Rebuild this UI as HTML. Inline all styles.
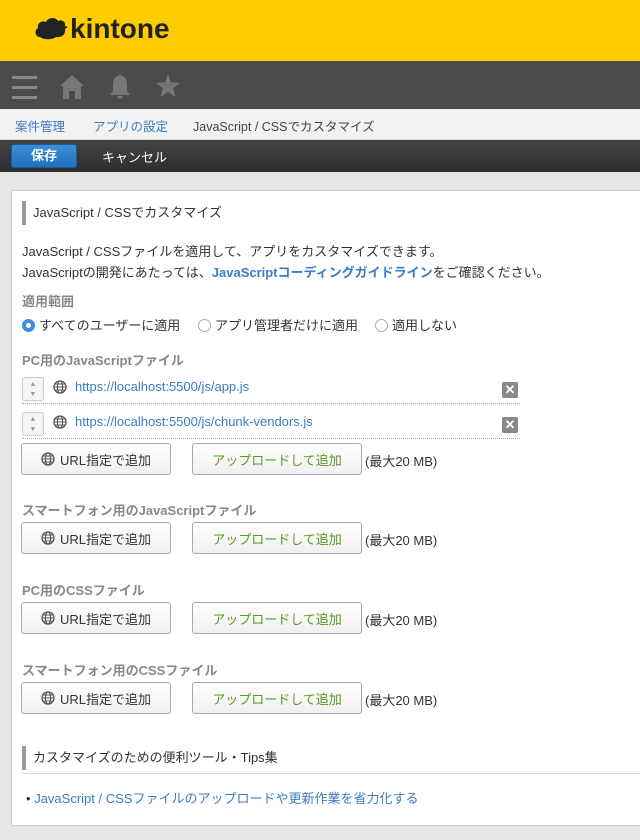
<!DOCTYPE html>
<html><head><meta charset="utf-8"><style>
*{box-sizing:border-box;margin:0;padding:0}
body{width:640px;height:840px;overflow:hidden;background:#e6e6e6;font-family:"Liberation Sans","Noto Sans CJK JP",sans-serif;position:relative;font-size:13px;color:#333}
.a{position:absolute;white-space:nowrap}
.hdr{left:0;top:0;width:640px;height:61px;background:#fc0}
.nav{left:0;top:61px;width:640px;height:48px;background:#4b4b4b}
.bc{left:0;top:109px;width:640px;height:31px;background:#f2f2f2;border-bottom:1px solid #ddd}
.tb{left:0;top:140px;width:640px;height:32px;background:linear-gradient(#454545,#2d2d2d)}
.panel{left:11px;top:190px;width:640px;height:636px;background:#fff;border:1px solid #ccc}
.sec{border-left:4px solid #999;padding-left:7px;font-size:13px;color:#333;height:24px;line-height:24px}
.lbl{color:#888;font-weight:bold;font-size:13px}
.btn{height:32px;border:1px solid #aaa;border-radius:3px;background:linear-gradient(#fff,#f0f0f0);font-size:13px;display:flex;align-items:center;justify-content:center;gap:5px}
.link{color:#3b7cc4}
.x{width:16px;height:16px;background:#888;border-radius:2px;color:#fff;font-size:13px;line-height:16px;text-align:center;font-weight:bold}
.radio{display:inline-block;width:13px;height:13px;border-radius:50%;border:1px solid #aaa;vertical-align:-2px;margin-right:4px}
.sp{width:22px;height:24px;border:1px solid #ccc;border-radius:3px;background:#f5f5f5;color:#999;font-size:7px;text-align:center;line-height:10px;padding-top:2px}
.dot{height:1px;border-top:1px dotted #aaa;width:498px;left:22px}
</style></head><body>
<svg width="0" height="0" style="position:absolute"><defs><g id="gl"><circle cx="7" cy="7" r="6" fill="none" stroke="#555" stroke-width="1.3"/><ellipse cx="7" cy="7" rx="2.6" ry="6" fill="none" stroke="#555" stroke-width="1.1"/><path d="M1 7H13M2 4H12M2 10H12" stroke="#555" stroke-width="1"/></g></defs></svg>
<div class="a hdr"></div>
<svg class="a" style="left:34px;top:15px" width="34" height="26" viewBox="0 0 34 26"><path d="M6 22 C1 22 0 15 4 13 C3 8 8 5 12 7 C14 2 22 2 24 6 C28 4 32 7 31 11 L34 12 L31 14 C32 19 28 23 22 22 C18 25 10 25 6 22Z" fill="#222"/></svg>
<div class="a" style="left:70px;top:13px;font-size:28px;font-weight:bold;color:#222">kintone</div>
<div class="a nav"></div>
<div class="a" style="left:12px;top:76px;width:25px;height:3px;background:#888;box-shadow:0 10px 0 #888,0 20px 0 #888"></div>
<svg class="a" style="left:58px;top:73px" width="28" height="28" viewBox="0 0 28 28"><path d="M14 2 L26 13 H23 V26 H17 V18 H11 V26 H5 V13 H2 Z" fill="#777"/></svg>
<svg class="a" style="left:106px;top:73px" width="28" height="28" viewBox="0 0 28 28"><path d="M14 2 C9 3 7 7 7 12 V18 L4 22 H24 L21 18 V12 C21 7 19 3 14 2Z M11 23 A3 3 0 0 0 17 23Z" fill="#777"/></svg>
<svg class="a" style="left:155px;top:73px" width="26" height="26" viewBox="0 0 26 26"><path d="M13 1 L16 9.5 L25 9.8 L18 15.3 L20.5 24 L13 19 L5.5 24 L8 15.3 L1 9.8 L10 9.5Z" fill="#777"/></svg>
<div class="a bc"></div>
<div class="a link" style="left:15px;top:116px;font-size:12.5px">案件管理</div>
<div class="a link" style="left:93px;top:116px;font-size:12.5px">アプリの設定</div>
<div class="a" style="left:193px;top:116px;font-size:12.5px;color:#444">JavaScript / CSSでカスタマイズ</div>
<div class="a tb"></div>
<div class="a" style="left:11px;top:144px;width:66px;height:24px;background:linear-gradient(#3d8fd8,#1f6fbd);border:1px solid #1a5a9a;border-radius:3px;color:#fff;font-weight:bold;text-align:center;line-height:22px">保存</div>
<div class="a" style="left:102px;top:147px;color:#fff;font-size:13px">キャンセル</div>
<div class="a panel"></div>
<div class="a sec" style="left:22px;top:201px;width:640px">JavaScript / CSSでカスタマイズ</div>
<div class="a" style="left:22px;top:241px">JavaScript / CSSファイルを適用して、アプリをカスタマイズできます。</div>
<div class="a" style="left:22px;top:262px">JavaScriptの開発にあたっては、<b class="link">JavaScriptコーディングガイドライン</b>をご確認ください。</div>
<div class="a lbl" style="left:22px;top:291px">適用範囲</div>
<div class="a" style="left:22px;top:315px"><span class="radio" style="border:4px solid #3b8ee0"></span>すべてのユーザーに適用</div>
<div class="a" style="left:198px;top:315px"><span class="radio"></span>アプリ管理者だけに適用</div>
<div class="a" style="left:375px;top:315px"><span class="radio"></span>適用しない</div>
<div class="a lbl" style="left:22px;top:350px">PC用のJavaScriptファイル</div>
<div class="a sp" style="left:22px;top:377px">▲<br>▼</div>
<svg class="a" style="left:53px;top:380px" width="14" height="14"><use href="#gl"/></svg>
<div class="a link" style="left:75px;top:379px">https://localhost:5500/js/app.js</div>
<div class="a x" style="left:502px;top:382px">✕</div>
<div class="a dot" style="top:403px"></div>
<div class="a sp" style="left:22px;top:412px">▲<br>▼</div>
<svg class="a" style="left:53px;top:415px" width="14" height="14"><use href="#gl"/></svg>
<div class="a link" style="left:75px;top:414px">https://localhost:5500/js/chunk-vendors.js</div>
<div class="a x" style="left:502px;top:417px">✕</div>
<div class="a dot" style="top:438px"></div>
<div class="a btn" style="left:21px;top:443px;width:150px"><svg width="14" height="14"><use href="#gl"/></svg>URL指定で追加</div>
<div class="a btn" style="left:192px;top:443px;width:170px;color:#5a9a1e">アップロードして追加</div>
<div class="a" style="left:365px;top:451px">(最大20 MB)</div>
<div class="a lbl" style="left:22px;top:500px">スマートフォン用のJavaScriptファイル</div>
<div class="a btn" style="left:21px;top:522px;width:150px"><svg width="14" height="14"><use href="#gl"/></svg>URL指定で追加</div>
<div class="a btn" style="left:192px;top:522px;width:170px;color:#5a9a1e">アップロードして追加</div>
<div class="a" style="left:365px;top:530px">(最大20 MB)</div>
<div class="a lbl" style="left:22px;top:580px">PC用のCSSファイル</div>
<div class="a btn" style="left:21px;top:602px;width:150px"><svg width="14" height="14"><use href="#gl"/></svg>URL指定で追加</div>
<div class="a btn" style="left:192px;top:602px;width:170px;color:#5a9a1e">アップロードして追加</div>
<div class="a" style="left:365px;top:610px">(最大20 MB)</div>
<div class="a lbl" style="left:22px;top:660px">スマートフォン用のCSSファイル</div>
<div class="a btn" style="left:21px;top:682px;width:150px"><svg width="14" height="14"><use href="#gl"/></svg>URL指定で追加</div>
<div class="a btn" style="left:192px;top:682px;width:170px;color:#5a9a1e">アップロードして追加</div>
<div class="a" style="left:365px;top:690px">(最大20 MB)</div>
<div class="a" style="left:22px;top:746px;width:620px;border-bottom:1px solid #ddd;height:28px"><div class="sec">カスタマイズのための便利ツール・Tips集</div></div>
<div class="a" style="left:26px;top:788px"><span style="color:#333">•</span> <span class="link">JavaScript / CSSファイルのアップロードや更新作業を省力化する</span></div>
</body></html>
